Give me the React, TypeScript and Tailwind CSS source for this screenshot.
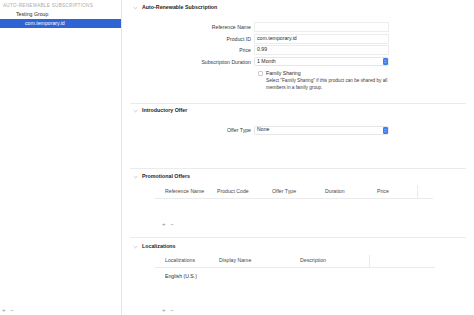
import React from "react";

const font = { fontFamily: '"Liberation Sans", Arial, sans-serif' };

function Chevron() {
  return (
    <svg width="5" height="4" viewBox="0 0 5 4" className="mr-[4px]">
      <path d="M0.8 1.2 L2.5 2.8 L4.2 1.2" fill="none" stroke="#b0b0b0" strokeWidth="0.7" />
    </svg>
  );
}

function SectionHeader({ title, h }: { title: string; h: string }) {
  return (
    <div className={`flex items-center pl-[3px] ${h}`}>
      <Chevron />
      <span className="text-[5.3px] font-bold text-[#1e1e1e]">{title}</span>
    </div>
  );
}

function Label({ children }: { children: React.ReactNode }) {
  return (
    <div className="w-[124px] text-right text-[5.2px] text-[#3a3a3a] pr-[3px] leading-[10px]">{children}</div>
  );
}

function TextField({ value }: { value?: string }) {
  return (
    <div className="w-[135px] h-[10px] border border-[#ececec] bg-white flex items-center pl-[2px] text-[5.2px] text-[#2a2a2a]">
      {value}
    </div>
  );
}

function Popup({ value }: { value: string }) {
  return (
    <div className="w-[135px] h-[9px] border border-[#e6e6e6] rounded-[1.5px] bg-white flex items-center pl-[2px] text-[5.2px] text-[#2a2a2a] justify-between">
      <span>{value}</span>
      <div className="w-[5px] h-[7px] rounded-[1.2px] bg-[#3d7df0] flex flex-col items-center justify-center">
        <svg width="3" height="5" viewBox="0 0 3 5">
          <path d="M0.6 1.8 L1.5 0.9 L2.4 1.8 M0.6 3.2 L1.5 4.1 L2.4 3.2" fill="none" stroke="white" strokeWidth="0.5" />
        </svg>
      </div>
    </div>
  );
}

function PlusMinus() {
  return (
    <div className="flex items-center gap-[5px] text-[6px] text-[#8a8a8a] leading-none">
      <span>+</span>
      <span>−</span>
    </div>
  );
}

export default function App() {
  return (
    <div className="flex w-[474px] h-[315px] bg-white overflow-hidden" style={font}>
      {/* Sidebar */}
      <aside className="w-[122px] border-r border-[#e6e6e6] flex flex-col bg-white shrink-0">
        <div className="h-[10px] pl-[3px] text-[4.6px] tracking-[0.3px] text-[#aaaaaa] leading-[11px] whitespace-nowrap">
          AUTO-RENEWABLE SUBSCRIPTIONS
        </div>
        <div className="h-[9px] pl-[16px] text-[5.2px] text-[#2a2a2a] leading-[9px]">Testing Group</div>
        <div className="h-[9px] pl-[25px] text-[5.2px] text-white bg-[#2f64d4] leading-[9px]">com.temporary.id</div>
        <div className="flex-1" />
        <div className="h-[8px] pl-[2px] flex items-start">
          <PlusMinus />
        </div>
      </aside>

      {/* Main */}
      <main className="flex-1 flex flex-col px-[8px]">
        {/* Section 1 */}
        <section className="h-[104px] border-b border-[#ebebeb] flex flex-col shrink-0">
          <SectionHeader title="Auto-Renewable Subscription" h="h-[16px]" />
          <div className="mt-[6px] flex flex-col gap-[1.67px]">
            <div className="flex items-center h-[10px]">
              <Label>Reference Name</Label>
              <TextField />
            </div>
            <div className="flex items-center h-[10px]">
              <Label>Product ID</Label>
              <TextField value="com.temporary.id" />
            </div>
            <div className="flex items-center h-[10px]">
              <Label>Price</Label>
              <TextField value="0.99" />
            </div>
            <div className="flex items-center h-[10px]">
              <Label>Subscription Duration</Label>
              <Popup value="1 Month" />
            </div>
          </div>
          <div className="flex mt-[3px] pl-[128px]">
            <div className="w-[5px] h-[5px] border border-[#cccccc] rounded-[1px] bg-white mt-[1px] mr-[3px]" />
            <div className="flex flex-col">
              <div className="text-[5.2px] text-[#2a2a2a] leading-[7px]">Family Sharing</div>
              <div className="text-[4.7px] text-[#3a3a3a] leading-[7px] w-[130px]">
                Select "Family Sharing" if this product can be shared by all members in a family group.
              </div>
            </div>
          </div>
        </section>

        {/* Section 2 */}
        <section className="h-[65px] border-b border-[#ebebeb] flex flex-col shrink-0">
          <SectionHeader title="Introductory Offer" h="h-[14px]" />
          <div className="mt-[7px] flex items-center h-[10px]">
            <Label>Offer Type</Label>
            <Popup value="None" />
          </div>
        </section>

        {/* Section 3 */}
        <section className="h-[69px] border-b border-[#ebebeb] flex flex-col shrink-0">
          <SectionHeader title="Promotional Offers" h="h-[16px]" />
          <div className="ml-[25px] w-[278px] h-[14px] border-b border-[#ebebeb] flex items-center text-[5.2px] text-[#4a4a4a]">
            <div className="w-[52px] pl-[10px]">Reference Name</div>
            <div className="w-[55px] pl-[10px]">Product Code</div>
            <div className="w-[53px] pl-[10px]">Offer Type</div>
            <div className="w-[52px] pl-[10px]">Duration</div>
            <div className="w-[51px] pl-[10px] h-full flex items-center border-r border-[#ebebeb]">Price</div>
          </div>
          <div className="mt-[22px] pl-[32px]">
            <PlusMinus />
          </div>
        </section>

        {/* Section 4 */}
        <section className="flex-1 flex flex-col">
          <SectionHeader title="Localizations" h="h-[17px]" />
          <div className="ml-[25px] w-[280px] h-[13px] border-b border-[#ebebeb] flex items-center text-[5.2px] text-[#4a4a4a]">
            <div className="w-[54px] pl-[10px]">Localizations</div>
            <div className="w-[81px] pl-[10px]">Display Name</div>
            <div className="w-[80px] pl-[10px] h-full flex items-center border-r border-[#ebebeb]">Description</div>
          </div>
          <div className="ml-[25px] h-[18px] flex items-center pl-[10px] text-[5.2px] text-[#2a2a2a]">English (U.S.)</div>
          <div className="mt-[21px] pl-[32px]">
            <PlusMinus />
          </div>
        </section>
      </main>
    </div>
  );
}
